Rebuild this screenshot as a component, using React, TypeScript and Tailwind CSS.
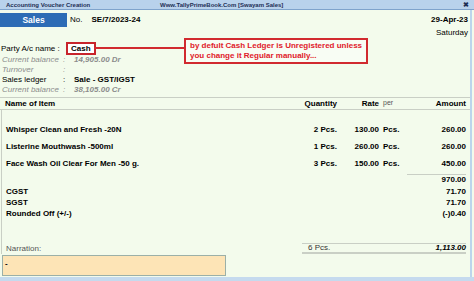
const items = [
  { name: "Whisper Clean and Fresh -20N", qty: "2 Pcs.", rate: "130.00", per: "Pcs.", amount: "260.00" },
  { name: "Listerine Mouthwash -500ml", qty: "1 Pcs.", rate: "260.00", per: "Pcs.", amount: "260.00" },
  { name: "Face Wash Oil Clear For Men -50 g.", qty: "3 Pcs.", rate: "150.00", per: "Pcs.", amount: "450.00" },
];

const duties = [
  { name: "CGST", amount: "71.70" },
  { name: "SGST", amount: "71.70" },
  { name: "Rounded Off (+/-)", amount: "(-)0.40" },
];

function InfoRow({ label, value, muted }: { label: string; value: string; muted?: boolean }) {
  return (
    <div className={`flex items-center h-[10px] leading-[10px] ${muted ? "italic text-[#8c8c8c]" : "text-black"}`}>
      <span className="w-[61px] whitespace-nowrap">{label}</span>
      <span className="w-[11px]">:</span>
      <span className="font-bold whitespace-nowrap">{value}</span>
    </div>
  );
}

export default function App() {
  return (
    <div className="w-[474px] h-[281px] overflow-hidden bg-[#f3fbec] font-['Liberation_Sans',Arial,sans-serif] text-[8px] text-black flex flex-col relative">
      {/* title bar */}
      <div className="h-[10px] shrink-0 bg-[#b9d2ec] border-b border-[#7fa3cc] flex items-center pl-[6px] pr-[5px] text-[6px] font-bold text-[#1e2f55] leading-none">
        <span className="w-[154px]">Accounting Voucher Creation</span>
        <span className="flex-1">Www.TallyPrimeBook.Com [Swayam Sales]</span>
        <span className="text-[7px]">✖</span>
      </div>

      <div className="flex-1 flex flex-col w-[472px] border-r-2 border-[#bcd5ec]">
        {/* voucher type row */}
        <div className="mt-[3px] h-[14px] flex items-center">
          <div className="w-[67px] h-full bg-[#2d6cb5] text-white font-bold text-[8.5px] flex items-center justify-center">
            Sales
          </div>
          <span className="ml-[3px]">No.</span>
          <span className="ml-[9px] font-bold">SE/7/2023-24</span>
          <span className="ml-auto mr-[2px] font-bold">29-Apr-23</span>
        </div>
        <div className="h-[11px] flex items-center justify-end pr-[2px]">Saturday</div>

        {/* party */}
        <div className="pl-[1px] mt-[4px] h-[13px] flex items-center">
          <span className="w-[65px] whitespace-nowrap">Party A/c name :</span>
          <span className="h-[13px] px-[3px] border-2 border-[#c8242b] bg-white font-bold flex items-center">Cash</span>
        </div>
        <div className="pl-[2px] flex flex-col">
          <InfoRow label="Current balance" value="14,905.00 Dr" muted />
          <InfoRow label="Turnover" value="" muted />
          <InfoRow label="Sales ledger" value="Sale - GST/IGST" />
          <InfoRow label="Current balance" value="38,105.00 Cr" muted />
        </div>

        {/* table header */}
        <div className="mt-[2px] h-[13px] flex items-center border-y border-[#c9cfc5] font-bold">
          <span className="flex-1 pl-[5px]">Name of Item</span>
          <span className="w-[40px] pr-[4px] text-right">Quantity</span>
          <span className="w-[42px] pr-[4px] text-right">Rate</span>
          <span className="w-[27px] font-normal text-[7px] text-[#555]">per</span>
          <span className="w-[60px] text-right pr-[4px]">Amount</span>
        </div>

        {/* items */}
        <div className="flex-1 flex flex-col border-l border-[#c9cfc5] ml-[1px]">
          <div className="pt-[11px] flex flex-col">
            {items.map((it) => (
              <div key={it.name} className="h-[17px] flex items-center font-bold">
                <span className="flex-1 pl-[4px]">{it.name}</span>
                <span className="w-[40px] pr-[4px] text-right">{it.qty}</span>
                <span className="w-[42px] pr-[4px] text-right">{it.rate}</span>
                <span className="w-[27px]">{it.per}</span>
                <span className="w-[60px] text-right pr-[4px]">{it.amount}</span>
              </div>
            ))}
          </div>
          <div className="flex justify-end mt-[2px]">
            <div className="w-[59px] mr-[4px] border-t border-[#c9cfc5] h-[10px] flex items-center justify-end font-bold">970.00</div>
          </div>
          <div className="mt-[2px] flex flex-col">
            {duties.map((d) => (
              <div key={d.name} className="h-[11px] flex items-center font-bold">
                <span className="flex-1 pl-[4px]">{d.name}</span>
                <span className="pr-[4px]">{d.amount}</span>
              </div>
            ))}
          </div>

          {/* totals */}
          <div className="mt-auto h-[11px] flex items-center">
            <span className="flex-1 pl-[4px] text-[#555]">Narration:</span>
            <div className="w-[164px] mr-[4px] h-full flex items-center border-t border-b-2 border-[#c9cfc5]">
              <span className="pl-[6px] text-[#333]">6 Pcs.</span>
              <span className="ml-auto font-bold italic">1,113.00</span>
            </div>
          </div>
        </div>

        {/* narration input */}
        <div className="h-[23px] flex items-start">
          <div className="ml-[2px] mt-[1px] w-[224px] h-[21px] bg-[#fde4b6] border border-[#9bb0a8] pl-[2px] pt-[4px] font-bold leading-none">
            -
          </div>
        </div>
      </div>
      <div className="h-[4px] shrink-0 bg-[#c5daee]" />

      {/* annotation callout */}
      <div className="absolute left-[94px] top-[47px] w-[90px] h-[2px] bg-[#d12a2f]" />
      <div className="absolute left-[184px] top-[38px] w-[184px] h-[26px] border-2 border-[#d12a2f] bg-[#f8fdf4] pl-[4px] flex flex-col justify-center text-[#e0202a] font-bold leading-[10px] whitespace-nowrap">
        <span>by defult Cash Ledger is Unregistered unless</span>
        <span>you change it Regular manually...</span>
      </div>
    </div>
  );
}
